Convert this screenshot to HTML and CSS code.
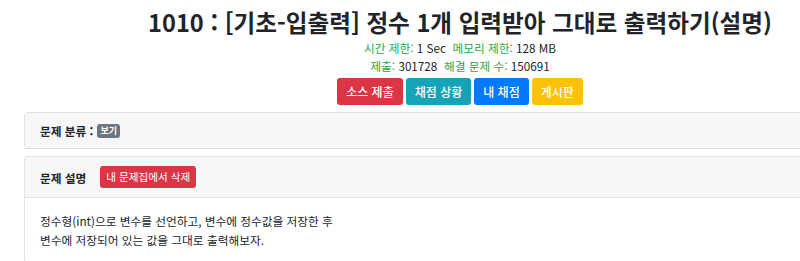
FILE: index.html
```html
<!DOCTYPE html>
<html lang="ko">
  <head>
    <meta charset="UTF-8"/>
    <meta name="viewport" content="width=device-width, initial-scale=1.0">
    <link rel="stylesheet" href="styles.css">
    <title>1010 : [기초-입출력] 정수 1개 입력받아 그대로 출력하기(설명)</title>
  </head>
  <body>
    <div class="pageContainer">
      <div class="problemHeader">
        <h1 class="problemHeader_title">1010 : [기초-입출력] 정수 1개 입력받아 그대로 출력하기(설명)</h1>
        <p class="problemHeader_info">
          <span class="textGreen">시간 제한:</span> 1 Sec&nbsp;&nbsp;<span class="textGreen">메모리 제한:</span> 128 MB
        </p>
        <p class="problemHeader_info">
          <span class="textGreen">제출:</span> 301728&nbsp;&nbsp;<span class="textGreen">해결 문제 수:</span> 150691
        </p>
        <div class="problemHeader_buttons">
          <a class="button button_red">소스 제출</a>
          <a class="button button_teal">채점 상황</a>
          <a class="button button_blue">내 채점</a>
          <a class="button button_yellow">게시판</a>
        </div>
      </div>

      <div class="card">
        <div class="card_header card_header_last">
          <span class="card_title">문제 분류 :</span>
          <span class="badge">보기</span>
        </div>
      </div>

      <div class="card">
        <div class="card_header">
          <span class="card_title">문제 설명</span>
          <a class="smallButton button_red">내 문제집에서 삭제</a>
        </div>
        <div class="card_body">
          <p>정수형(int)으로 변수를 선언하고, 변수에 정수값을 저장한 후<br/>변수에 저장되어 있는 값을 그대로 출력해보자.</p>
        </div>
      </div>
    </div>
  </body>
</html>
```

FILE: styles.css
```css
html, body {
  margin: 0;
  padding: 0;
  background-color: white;
  overflow: hidden;
}
body {
  font-family: "Noto Sans CJK KR", "Noto Sans", sans-serif;
  color: #212529;
  font-size: 11.7px;
}
.pageContainer {
  width: 872px;
  margin-left: 24px;
}

.problemHeader {
  text-align: center;
}
  .problemHeader_title {
    margin: 0;
    padding-top: 5px;
    font-size: 23.6px;
    line-height: 34px;
    font-weight: bold;
  }
  .problemHeader_info {
    margin: 0;
    font-size: 11.7px;
    line-height: 18px;
  }
  .textGreen {
    color: #28a745;
  }
  .problemHeader_buttons {
    display: flex;
    justify-content: center;
    gap: 3px;
    margin-top: 3px;
  }

.button {
  display: inline-block;
  color: white;
  font-size: 12px;
  font-weight: 500;
  line-height: 27px;
  height: 27px;
  padding: 0 9px;
  border-radius: 3px;
}
.button_red {
  background-color: #dc3545;
}
.button_teal {
  background-color: #17a2b8;
}
.button_blue {
  background-color: #007bff;
}
.button_yellow {
  background-color: #ffc107;
}

.card {
  margin-top: 7px;
  border: 1px solid #e2e2e2;
  border-radius: 3px;
  background-color: white;
}
  .card_header {
    display: flex;
    align-items: center;
    background-color: #f7f7f7;
    border-bottom: 1px solid #e2e2e2;
    padding: 0 15px;
    height: 40px;
  }
  .card_header_last {
    height: 35px;
    border-bottom: 0;
    box-shadow: 0 1px 0 #dadada;
  }
  .card_title {
    font-weight: bold;
    font-size: 11.7px;
  }
  .badge {
    margin-left: 4px;
    background-color: #6c757d;
    color: white;
    font-size: 9px;
    font-weight: bold;
    line-height: 14px;
    padding: 0 3px;
    border-radius: 3px;
  }
  .smallButton {
    margin-left: 14px;
    color: white;
    font-size: 10.6px;
    line-height: 22px;
    padding: 0 6px;
    border-radius: 3px;
  }
  .card_body {
    padding: 13px 15px;
  }
  .card_body p {
    margin: 0;
    line-height: 19px;
  }
```
